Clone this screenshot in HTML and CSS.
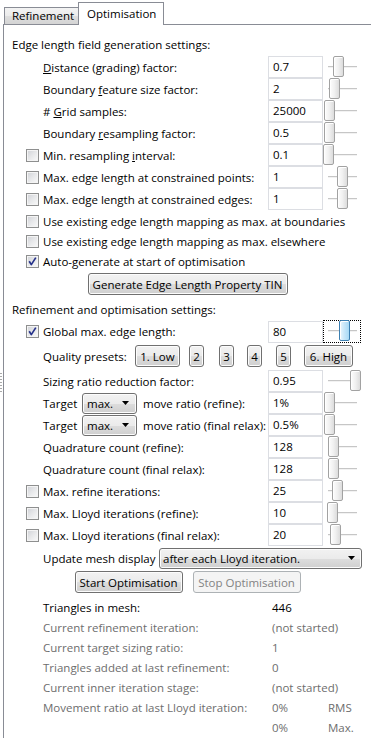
FILE: index.html
```html
<!DOCTYPE html>
<html>
<head>
<meta charset="utf-8">
<link rel="stylesheet" href="styles.css">
</head>
<body>
<div class="grip"></div>
<div class="tabstrip">
  <div class="tab tab-ref">Refinement</div>
  <div class="tab tab-opt">Optimisation</div>
</div>
<div class="panel">
  <div class="heading h1">Edge length field generation settings:</div>

  <div class="row"><span class="c1"></span><span class="lbl"><u>D</u>istance (grading) factor:</span><span class="tb">0.7</span><span class="sl"><i class="thumb" style="left:10px"></i></span></div>
  <div class="row"><span class="c1"></span><span class="lbl">Boundary <u>f</u>eature size factor:</span><span class="tb">2</span><span class="sl"><i class="thumb" style="left:6px"></i></span></div>
  <div class="row"><span class="c1"></span><span class="lbl"># <u>G</u>rid samples:</span><span class="tb">25000</span><span class="sl"><i class="thumb" style="left:1px"></i></span></div>
  <div class="row"><span class="c1"></span><span class="lbl">Boundary <u>r</u>esampling factor:</span><span class="tb">0.5</span><span class="sl"><i class="thumb" style="left:1px"></i></span></div>
  <div class="row"><span class="c1"><span class="cb"></span></span><span class="lbl">Min. resampling <u>i</u>nterval:</span><span class="tb">0.1</span><span class="sl"><i class="thumb" style="left:0px"></i></span></div>
  <div class="row"><span class="c1"><span class="cb"></span></span><span class="lbl">Max. edge length at constrained points:</span><span class="tb">1</span><span class="sl"><i class="thumb" style="left:14px"></i></span></div>
  <div class="row"><span class="c1"><span class="cb"></span></span><span class="lbl">Max. edge length at constrained edges:</span><span class="tb">1</span><span class="sl"><i class="thumb" style="left:14px"></i></span></div>

  <div class="crow first"><span class="c1"><span class="cb"></span></span><span class="lbl">Use existing edge length mapping as max. at boundaries</span></div>
  <div class="crow"><span class="c1"><span class="cb"></span></span><span class="lbl">Use existing edge length mapping as max. elsewhere</span></div>
  <div class="crow"><span class="c1"><span class="cb checked"><svg width="11" height="11" viewBox="0 0 11 11"><path d="M2.2 5.2 L4.3 8.6 L8.8 1.6" fill="none" stroke="#25318a" stroke-width="1.7" stroke-linejoin="round"/></svg></span></span><span class="lbl">Auto-generate at start of optimisation</span></div>

  <div class="btnrow gen"><button class="btn wide">Generate Edge Length Property TIN</button></div>

  <div class="heading h2">Refinement and optimisation settings:</div>

  <div class="row"><span class="c1"><span class="cb checked"><svg width="11" height="11" viewBox="0 0 11 11"><path d="M2.2 5.2 L4.3 8.6 L8.8 1.6" fill="none" stroke="#25318a" stroke-width="1.7" stroke-linejoin="round"/></svg></span></span><span class="lbl">Global max. edge length:</span><span class="tb">80</span><span class="sl focus"><i class="thumb hot" style="left:16px"></i></span></div>

  <div class="qrow"><span class="c1"></span><span class="qlbl">Quality presets:</span>
    <button class="btn q q1">1. Low</button>
    <button class="btn q q2">2</button>
    <button class="btn q q3">3</button>
    <button class="btn q q4">4</button>
    <button class="btn q q5">5</button>
    <button class="btn q q6">6. High</button>
  </div>

  <div class="row"><span class="c1"></span><span class="lbl">Sizing ratio reduction factor:</span><span class="tb">0.95</span><span class="sl"><i class="thumb" style="left:27px"></i></span></div>
  <div class="row"><span class="c1"></span><span class="lbl tgt"><span class="tword">Target</span><span class="combo small">max.<svg class="arr" width="7" height="4" viewBox="0 0 7 4"><path d="M0 0H7L3.5 4Z" fill="#000"/></svg></span><span>move ratio (refine):</span></span><span class="tb">1%</span><span class="sl"><i class="thumb" style="left:1px"></i></span></div>
  <div class="row"><span class="c1"></span><span class="lbl tgt"><span class="tword">Target</span><span class="combo small">max.<svg class="arr" width="7" height="4" viewBox="0 0 7 4"><path d="M0 0H7L3.5 4Z" fill="#000"/></svg></span><span>move ratio (final relax):</span></span><span class="tb">0.5%</span><span class="sl"><i class="thumb" style="left:1px"></i></span></div>
  <div class="row"><span class="c1"></span><span class="lbl">Quadrature count (refine):</span><span class="tb">128</span><span class="sl"><i class="thumb" style="left:5px"></i></span></div>
  <div class="row"><span class="c1"></span><span class="lbl">Quadrature count (final relax):</span><span class="tb">128</span><span class="sl"><i class="thumb" style="left:5px"></i></span></div>
  <div class="row"><span class="c1"><span class="cb"></span></span><span class="lbl">Max. refine iterations:</span><span class="tb">25</span><span class="sl"><i class="thumb" style="left:9px"></i></span></div>
  <div class="row"><span class="c1"><span class="cb"></span></span><span class="lbl">Max. Lloyd iterations (refine):</span><span class="tb">10</span><span class="sl"><i class="thumb" style="left:4px"></i></span></div>
  <div class="row"><span class="c1"><span class="cb"></span></span><span class="lbl">Max. Lloyd iterations (final relax):</span><span class="tb">20</span><span class="sl"><i class="thumb" style="left:7px"></i></span></div>

  <div class="urow"><span class="c1"></span><span class="ulbl">Update mesh display</span><span class="combo big">after each Lloyd iteration.<svg class="arr" width="7" height="4" viewBox="0 0 7 4"><path d="M0 0H7L3.5 4Z" fill="#000"/></svg></span></div>

  <div class="btnrow run"><button class="btn act">Start Optimisation</button><button class="btn act disabled">Stop Optimisation</button></div>

  <div class="info">
    <div class="irow dark"><span class="c1"></span><span>Triangles in mesh:</span><span>446</span><span></span></div>
    <div class="irow"><span class="c1"></span><span>Current refinement iteration:</span><span>(not started)</span><span></span></div>
    <div class="irow"><span class="c1"></span><span>Current target sizing ratio:</span><span>1</span><span></span></div>
    <div class="irow"><span class="c1"></span><span>Triangles added at last refinement:</span><span>0</span><span></span></div>
    <div class="irow"><span class="c1"></span><span>Current inner iteration stage:</span><span>(not started)</span><span></span></div>
    <div class="irow"><span class="c1"></span><span>Movement ratio at last Lloyd iteration:</span><span>0%</span><span>RMS</span></div>
    <div class="irow"><span class="c1"></span><span></span><span>0%</span><span>Max.</span></div>
  </div>
</div>
</body>
</html>
```
FILE: styles.css
```css
html, body {
  margin: 0;
  padding: 0;
  background: #ffffff;
}
body {
  font-family: "Segoe UI", "Open Sans", "Noto Sans", sans-serif;
  font-size: 11.5px;
  color: #000;
  width: 371px;
  height: 738px;
  overflow: hidden;
  position: relative;
}
u { text-decoration: underline; text-underline-offset: 1px; }

.grip {
  position: absolute;
  left: 0;
  top: 373px;
  width: 2px;
  height: 20px;
  background: repeating-linear-gradient(to bottom, #a9a9a9 0 1px, transparent 1px 3px);
}

/* tabs */
.tabstrip {
  display: flex;
  align-items: flex-end;
  height: 24px;
  padding-left: 4px;
}
.tab {
  box-sizing: border-box;
  border: 1px solid #898c95;
  border-bottom: none;
  padding-left: 7px;
  white-space: nowrap;
  line-height: 16px;
}
.tab-ref {
  width: 75px;
  height: 17px;
  background: linear-gradient(to bottom, #f3f3f3 0%, #ebebeb 50%, #dedede 51%, #d4d4d4 100%);
  line-height: 15px;
}
.tab-opt {
  width: 86px;
  height: 23px;
  margin-left: -1px;
  margin-bottom: -1px;
  background: #ffffff;
  position: relative;
  z-index: 1;
  line-height: 22px;
  padding-left: 8px;
}

.panel {
  margin-left: 3px;
  border-left: 1px solid #898c95;
  border-top: 1px solid #898c95;
  height: 714px;
  background: #ffffff;
}

.heading {
  padding-left: 8px;
  height: 20px;
  line-height: 20px;
}
.h1 { margin-top: 10px; height: 21px; }
.h2 { margin-top: 5px; }

.c1 {
  display: flex;
  align-items: center;
  padding-left: 22px;
}
.cb {
  display: block;
  width: 13px;
  height: 13px;
  box-sizing: border-box;
  border: 1px solid #8e8f8f;
  background: linear-gradient(135deg, #cfd1d6 0%, #e7e8ea 50%, #fafafa 100%);
  box-shadow: inset 0 0 0 1px #f4f4f4;
  position: relative;
}
.cb svg { position: absolute; left: 0; top: 0; }

.row {
  display: grid;
  grid-template-columns: 39px 225px 55px 38px;
  height: 22px;
  align-items: center;
}
.lbl { white-space: nowrap; }
.tb {
  box-sizing: border-box;
  height: 22px;
  border: 1px solid #dcdee3;
  padding-left: 4px;
  line-height: 20px;
  background: #fff;
}
.sl {
  position: relative;
  height: 22px;
}
.sl::before {
  content: "";
  position: absolute;
  left: 5px;
  top: 10px;
  width: 29px;
  height: 1px;
  background: #c6c6c6;
  border-bottom: 1px solid #f2f2f2;
}
.sl.focus {
  outline: 1px dotted #000;
  outline-offset: -1px;
  height: 23px;
}
.thumb {
  position: absolute;
  top: 0;
  width: 11px;
  height: 21px;
  box-sizing: border-box;
  border: 1px solid #a2a2a2;
  border-radius: 2px;
  background: linear-gradient(to right, #fdfdfd 0%, #f0f0f0 50%, #dcdcdc 100%);
  box-shadow: inset 1px 1px 0 #ffffff;
}
.thumb.hot {
  border-color: #3c7fb1;
  background: linear-gradient(to right, #eaf6fd 0%, #c6e6f9 50%, #a7d9f5 100%);
}

.crow {
  display: grid;
  grid-template-columns: 39px 1fr;
  height: 20px;
  align-items: center;
}
.crow.first { margin-top: 1px; }

.btnrow {
  display: flex;
  justify-content: center;
}
.gen { margin-top: 2px; }
.run { height: 24px; align-items: center; gap: 10px; }

.btn {
  box-sizing: border-box;
  font: inherit;
  color: #000;
  border: 1px solid #707070;
  border-radius: 3px;
  background: linear-gradient(to bottom, #f2f2f2 0%, #ebebeb 50%, #dddddd 51%, #cfcfcf 100%);
  box-shadow: inset 0 0 0 1px #fcfcfc;
  padding: 0;
  margin: 0;
  height: 22px;
  line-height: 19px;
  white-space: nowrap;
}
.btn.wide { width: 200px; }
.btn.act { width: 108px; height: 22px; }
.btn.disabled {
  color: #838383;
  border-color: #adb2b5;
  background: #f4f4f4;
  box-shadow: none;
}

.qrow {
  display: flex;
  align-items: center;
  height: 28px;
}
.qrow .c1 { width: 17px; }
.qlbl { width: 92px; white-space: nowrap; }
.q { width: 15px; }
.q1 { width: 45px; }
.q2 { margin-left: 9px; }
.q3 { margin-left: 15px; }
.q4 { margin-left: 13px; }
.q5 { margin-left: 14px; }
.q6 { margin-left: 13px; width: 49px; }

.tgt {
  display: flex;
  align-items: center;
}
.tword { width: 39px; }
.combo {
  box-sizing: border-box;
  display: flex;
  align-items: center;
  justify-content: space-between;
  height: 21px;
  border: 1px solid #707070;
  border-radius: 3px;
  background: linear-gradient(to bottom, #f2f2f2 0%, #ebebeb 50%, #dddddd 51%, #cfcfcf 100%);
  box-shadow: inset 0 0 0 1px #fcfcfc;
  padding-left: 4px;
  white-space: nowrap;
}
.combo.small {
  width: 55px;
  margin-right: 6px;
  padding-right: 7px;
}
.combo.big {
  width: 203px;
  padding-left: 3px;
  padding-right: 6px;
}

.urow {
  display: flex;
  align-items: center;
  height: 24px;
}
.urow .c1 { width: 17px; }
.ulbl { width: 116px; white-space: nowrap; }

.info { margin-top: 3px; }
.irow {
  display: grid;
  grid-template-columns: 39px 229px 56px 1fr;
  height: 20px;
  align-items: center;
  color: #6d6d6d;
  white-space: nowrap;
}
.irow.dark { color: #000; }
```
